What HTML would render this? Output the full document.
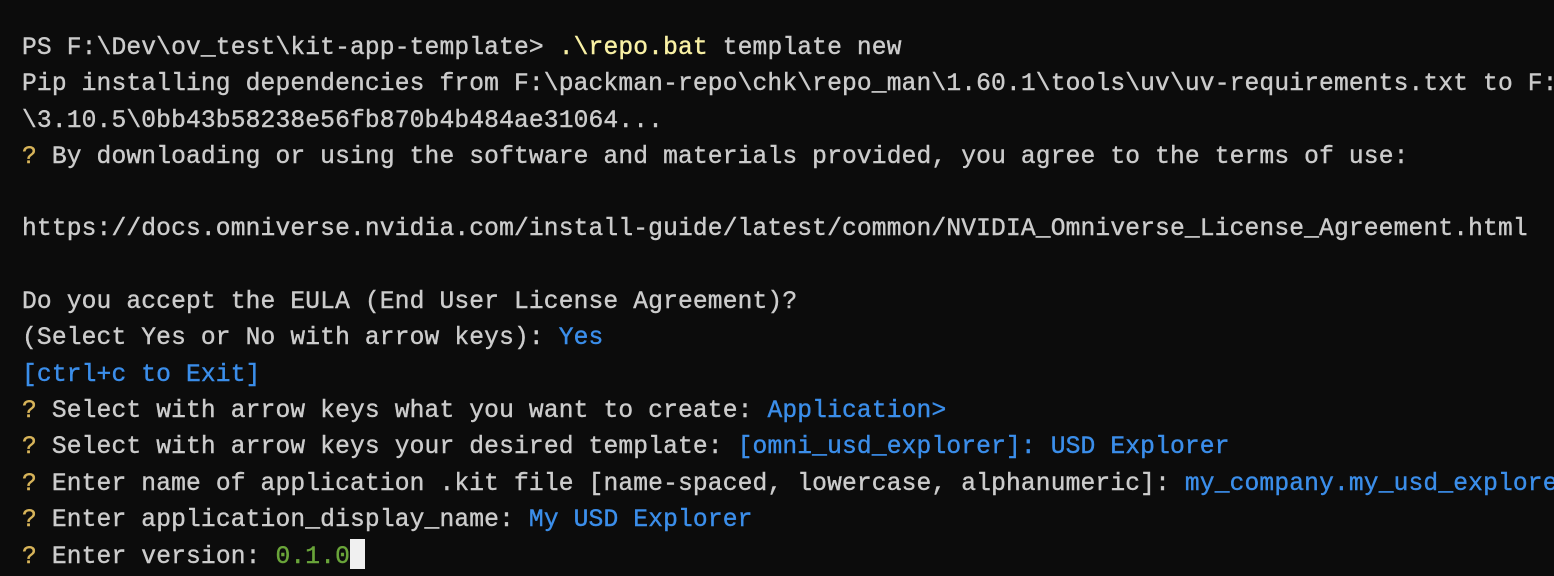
<!DOCTYPE html>
<html><head><meta charset="utf-8"><style>
html,body{margin:0;padding:0;background:#0c0c0c;width:1554px;height:570px;overflow:hidden}
pre{margin:0;position:absolute;left:22px;top:31px;font-family:"Liberation Mono",monospace;font-size:24.6px;letter-spacing:0.15px;line-height:36.3px;color:#cccccc;white-space:pre;font-weight:normal;-webkit-text-stroke:0.4px currentColor}
.y{color:#f9f1a5}.q{color:#d7b45a}.b{color:#3b8eea}.g{color:#6aa53a}
.c{display:inline-block;width:15px;height:30px;background:#f0f0f0;vertical-align:-6px}
</style></head><body><pre>PS F:\Dev\ov_test\kit-app-template&gt; <span class="y">.\repo.bat</span> template new
Pip installing dependencies from F:\packman-repo\chk\repo_man\1.60.1\tools\uv\uv-requirements.txt to F:
\3.10.5\0bb43b58238e56fb870b4b484ae31064...
<span class="q">?</span> By downloading or using the software and materials provided, you agree to the terms of use:

https://docs.omniverse.nvidia.com/install-guide/latest/common/NVIDIA_Omniverse_License_Agreement.html

Do you accept the EULA (End User License Agreement)?
(Select Yes or No with arrow keys): <span class="b">Yes</span>
<span class="b">[ctrl+c to Exit]</span>
<span class="q">?</span> Select with arrow keys what you want to create: <span class="b">Application&gt;</span>
<span class="q">?</span> Select with arrow keys your desired template: <span class="b">[omni_usd_explorer]: USD Explorer</span>
<span class="q">?</span> Enter name of application .kit file [name-spaced, lowercase, alphanumeric]: <span class="b">my_company.my_usd_explorer</span>
<span class="q">?</span> Enter application_display_name: <span class="b">My USD Explorer</span>
<span class="q">?</span> Enter version: <span class="g">0.1.0</span><span class="c"></span></pre></body></html>
